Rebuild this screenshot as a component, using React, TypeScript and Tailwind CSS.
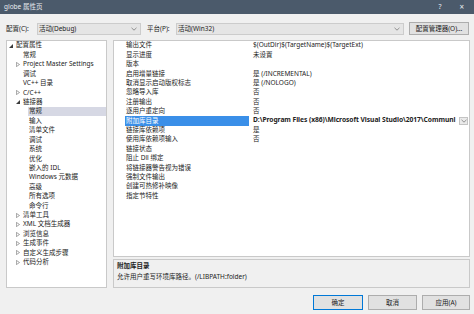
import React from 'react';

type TreeItem = { label: string; level: 0 | 1 | 2; arrow?: 'open' | 'closed'; selected?: boolean };
type Prop = { name: string; value?: string; selected?: boolean };

const tree: TreeItem[] = [
    { label: '配置属性', level: 0, arrow: 'open' },
    { label: '常规', level: 1 },
    { label: 'Project Master Settings', level: 1, arrow: 'closed' },
    { label: '调试', level: 1 },
    { label: 'VC++ 目录', level: 1 },
    { label: 'C/C++', level: 1, arrow: 'closed' },
    { label: '链接器', level: 1, arrow: 'open' },
    { label: '常规', level: 2, selected: true },
    { label: '输入', level: 2 },
    { label: '清单文件', level: 2 },
    { label: '调试', level: 2 },
    { label: '系统', level: 2 },
    { label: '优化', level: 2 },
    { label: '嵌入的 IDL', level: 2 },
    { label: 'Windows 元数据', level: 2 },
    { label: '高级', level: 2 },
    { label: '所有选项', level: 2 },
    { label: '命令行', level: 2 },
    { label: '清单工具', level: 1, arrow: 'closed' },
    { label: 'XML 文档生成器', level: 1, arrow: 'closed' },
    { label: '浏览信息', level: 1, arrow: 'closed' },
    { label: '生成事件', level: 1, arrow: 'closed' },
    { label: '自定义生成步骤', level: 1, arrow: 'closed' },
    { label: '代码分析', level: 1, arrow: 'closed' },
];

const props: Prop[] = [
    { name: '输出文件', value: '$(OutDir)$(TargetName)$(TargetExt)' },
    { name: '显示进度', value: '未设置' },
    { name: '版本' },
    { name: '启用增量链接', value: '是 (/INCREMENTAL)' },
    { name: '取消显示启动版权标志', value: '是 (/NOLOGO)' },
    { name: '忽略导入库', value: '否' },
    { name: '注册输出', value: '否' },
    { name: '逐用户重定向', value: '否' },
    { name: '附加库目录', value: 'D:\\Program Files (x86)\\Microsoft Visual Studio\\2017\\Communi', selected: true },
    { name: '链接库依赖项', value: '是' },
    { name: '使用库依赖项输入', value: '否' },
    { name: '链接状态' },
    { name: '阻止 Dll 绑定' },
    { name: '将链接器警告视为错误' },
    { name: '强制文件输出' },
    { name: '创建可热修补映像' },
    { name: '指定节特性' },
];

const indent = ['w-[8px]', 'w-[15px]', 'w-[21px]'];

const Chevron: React.FC = () => (
    <svg width="6" height="4" viewBox="0 0 6 4" className="shrink-0">
        <polyline points="0.5,0.8 3,3.2 5.5,0.8" fill="none" stroke="#7a7a7a" strokeWidth="0.8" />
    </svg>
);

const Arrow: React.FC<{ kind?: 'open' | 'closed' }> = ({ kind }) => {
    if (kind === 'open')
        return (
            <svg width="4" height="4" viewBox="0 0 4 4">
                <polygon points="0,4 4,4 4,0" fill="#3b3b3b" />
            </svg>
        );
    if (kind === 'closed')
        return (
            <svg width="4" height="5" viewBox="0 0 4 5">
                <polygon points="0.4,0.4 3.5,2.5 0.4,4.6" fill="none" stroke="#7c7c7c" strokeWidth="0.7" />
            </svg>
        );
    return null;
};

export default function App() {
    return (
        <div
            className="w-[474px] h-[314px] bg-[#f0f0f0] flex flex-col text-[6.5px] text-[#222222] overflow-hidden"
            style={{ fontFamily: '"Noto Sans", "Noto Sans CJK SC", sans-serif' }}
        >
            {/* title bar */}
            <div className="h-[14px] bg-[#4b5a6b] text-[#e8ecf0] flex items-center pl-[4px] pr-[10px] text-[6.5px]">
                <span>globe 属性页</span>
                <span className="ml-auto mr-[18px] text-[7px]">?</span>
                <span className="text-[8px] leading-none">×</span>
            </div>

            {/* configuration row */}
            <div className="mt-[8px] h-[13px] flex items-center pl-[6px]">
                <span className="w-[31px]">配置(C):</span>
                <div className="w-[104px] h-[12px] bg-[#e5e5e5] border border-[#cccccc] flex items-center pl-[1px] pr-[3px]">
                    <span>活动(Debug)</span>
                    <span className="ml-auto"><Chevron /></span>
                </div>
                <span className="ml-[6px] w-[29px]">平台(P):</span>
                <div className="w-[228px] h-[12px] bg-[#e5e5e5] border border-[#cccccc] flex items-center pl-[1px] pr-[3px]">
                    <span>活动(Win32)</span>
                    <span className="ml-auto"><Chevron /></span>
                </div>
                <div className="ml-[5px] w-[60px] h-[13px] bg-[#e1e1e1] border border-[#adadad] flex items-center justify-center whitespace-nowrap">
                    配置管理器(O)...
                </div>
            </div>

            {/* main */}
            <div className="mt-[5px] h-[248px] flex pl-[6px] pr-[4px]">
                <div className="w-[101px] shrink-0 bg-white border border-[#c9c9c9] flex flex-col">
                    {tree.map((t, i) => (
                        <div key={i} className="h-[9.43px] flex items-center leading-none">
                            <span className={`${indent[t.level]} shrink-0 flex justify-end pr-[2px]`}>
                                <Arrow kind={t.arrow} />
                            </span>
                            <span className={`pl-[1px] flex-1 h-full flex items-center whitespace-nowrap ${t.selected ? 'bg-[#d6d8e4]' : ''}`}>
                                {t.label}
                            </span>
                        </div>
                    ))}
                </div>

                <div className="ml-[6px] flex-1 min-w-0 flex flex-col">
                    <div className="h-[217px] bg-white border border-[#c9c9c9] pl-[11px] pr-[1px] flex flex-col">
                        {props.map((p, i) => (
                            <div key={i} className="h-[9.4px] flex items-center leading-none shrink-0">
                                <span
                                    className={`w-[124px] shrink-0 h-full flex items-center pl-[1px] whitespace-nowrap ${p.selected ? 'bg-[#3a8fe8] text-white' : ''}`}
                                >
                                    {p.name}
                                </span>
                                <span className={`flex-1 min-w-0 h-full flex items-center pl-[4px] whitespace-nowrap ${p.selected ? 'font-bold text-[6.7px] tracking-[-0.05px]' : ''}`}>
                                    {p.value}
                                    {p.selected && (
                                        <span className="ml-auto w-[9px] h-[8px] bg-[#eaeaea] border border-[#c4c4c4] flex items-center justify-center shrink-0">
                                            <Chevron />
                                        </span>
                                    )}
                                </span>
                            </div>
                        ))}
                    </div>
                    <div className="mt-[2px] flex-1 border border-[#c9c9c9] bg-[#f0f0f0] px-[3px] pt-[3px] flex flex-col gap-[4px] leading-none">
                        <span className="font-bold">附加库目录</span>
                        <span>允许用户重写环境库路径。(/LIBPATH:folder)</span>
                    </div>
                </div>
            </div>

            {/* buttons */}
            <div className="mt-[7px] flex justify-end gap-[5px] pr-[4px]">
                <div className="w-[50px] h-[15px] bg-[#e1e1e1] border border-[#0078d7] flex items-center justify-center">确定</div>
                <div className="w-[49px] h-[15px] bg-[#e1e1e1] border border-[#adadad] flex items-center justify-center">取消</div>
                <div className="w-[48px] h-[15px] bg-[#e1e1e1] border border-[#adadad] flex items-center justify-center">应用(A)</div>
            </div>
        </div>
    );
}
